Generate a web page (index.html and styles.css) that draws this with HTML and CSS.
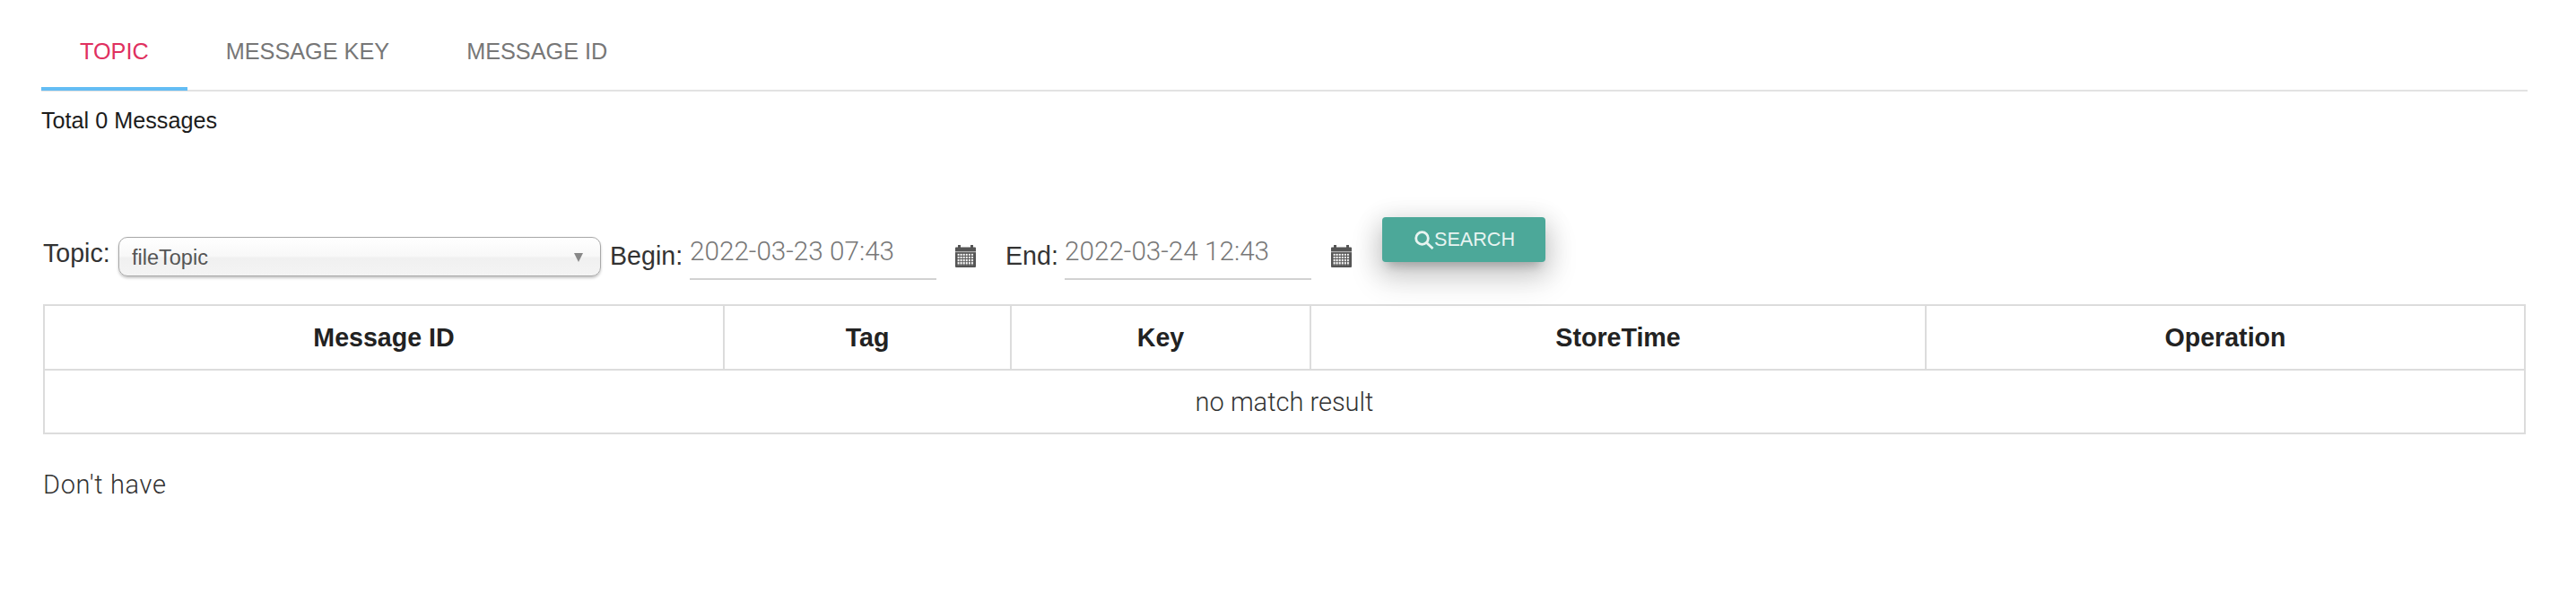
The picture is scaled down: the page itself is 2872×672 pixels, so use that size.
FILE: index.html
```html
<!DOCTYPE html>
<html lang="en">
<head>
<meta charset="utf-8">
<title>Message</title>
<link rel="stylesheet" href="styles.css">
</head>
<body>
<main class="page">
  <nav class="tabs">
    <a class="tab tab-active">TOPIC</a>
    <a class="tab">MESSAGE KEY</a>
    <a class="tab">MESSAGE ID</a>
  </nav>
  <p class="total">Total 0 Messages</p>
  <form class="search-row">
    <label class="label label-topic">Topic:</label>
    <div class="select-wrap">
      <select class="topic-select"><option>fileTopic</option></select>
    </div>
    <label class="label label-begin">Begin:</label>
    <input class="date-input" type="text" value="2022-03-23 07:43">
    <svg class="cal" viewBox="0 0 23 25" aria-hidden="true"><use href="#cal-icon"/></svg>
    <label class="label label-end">End:</label>
    <input class="date-input date-end" type="text" value="2022-03-24 12:43">
    <svg class="cal cal-end" viewBox="0 0 23 25" aria-hidden="true"><use href="#cal-icon"/></svg>
    <button class="search-btn" type="button">
      <svg class="search-icon" viewBox="0 0 22 21" aria-hidden="true"><circle cx="8.500" cy="8.500" r="6.800"/><path d="M13.500 13.500 20.500 20"/></svg>SEARCH
    </button>
  </form>
  <table class="results">
    <colgroup>
      <col class="col-id"><col class="col-tag"><col class="col-key"><col class="col-time"><col class="col-op">
    </colgroup>
    <thead>
      <tr><th>Message ID</th><th>Tag</th><th>Key</th><th>StoreTime</th><th>Operation</th></tr>
    </thead>
    <tbody>
      <tr><td colspan="5">no match result</td></tr>
    </tbody>
  </table>
  <p class="empty">Don't have</p>
</main>
<svg class="defs" aria-hidden="true">
  <defs>
    <pattern id="cal-dots" x="2.400" y="9.600" width="3.100" height="3.200" patternUnits="userSpaceOnUse">
      <rect width="2.100" height="2.200" fill="#fff"/>
    </pattern>
    <symbol id="cal-icon" viewBox="0 0 23 25">
      <path fill="#555" d="M3 0h3v2.500h11V0h3v2.500h2a1 1 0 0 1 1 1V24a1 1 0 0 1-1 1H1a1 1 0 0 1-1-1V3.500a1 1 0 0 1 1-1h2z"/>
      <rect x="0" y="7" width="23" height="1.200" fill="#fff" opacity=".55"/>
      <rect x="2.400" y="9.600" width="18.200" height="12.700" fill="url(#cal-dots)"/>
    </symbol>
  </defs>
</svg>
</body>
</html>
```
FILE: styles.css
```css
* { box-sizing: border-box; }
html, body { margin: 0; background: #fff; }
body {
  font-family: "Liberation Sans", Arial, sans-serif;
  color: #222;
  height: 672px;
  overflow: hidden;
}
.page { padding-left: 46px; width: 2818px; }

.tabs {
  display: flex;
  height: 102px;
  border-bottom: 2px solid #e2e2e2;
}
.tab {
  height: 101px;
  padding: 39px 43px 0;
  font-size: 25.250px;
  line-height: 36px;
  color: #777;
}
.tab-active {
  color: #e0305f;
  border-bottom: 4px solid #64bdf4;
  height: 101px;
}

.total {
  margin: 0;
  padding-top: 16px;
  font-size: 25.200px;
  line-height: 32px;
  color: #1c1c1c;
  height: 49px;
}

.search-row {
  display: flex;
  align-items: flex-start;
  height: 188px;
  padding-left: 2px;
}
.label {
  font-size: 28.600px;
  line-height: 34px;
  color: #333;
  margin-top: 114px;
}
.label-topic { width: 84px; }
.label-begin { margin-top: 117px; margin-left: 10px; width: 89px; }
.label-end { margin-top: 117px; margin-left: 33px; width: 66px; }

.select-wrap {
  position: relative;
  width: 538px;
  height: 44px;
  margin-top: 113px;
}
.select-wrap::after {
  content: "";
  position: absolute;
  left: 508px;
  top: 18px;
  border-style: solid;
  border-width: 10px 5.500px 0;
  border-color: #888 transparent transparent;
}
.topic-select {
  appearance: none;
  display: block;
  width: 100%;
  height: 100%;
  padding: 2px 0 0 14px;
  font-family: "Liberation Sans", Arial, sans-serif;
  font-size: 23.500px;
  color: #555;
  border: 1px solid #a8a8a8;
  border-radius: 10px;
  background: linear-gradient(#fff 0%, #f8f8f8 48%, #f0f0f0 54%, #f4f4f4 100%);
  box-shadow: 0 2px 3px rgba(0, 0, 0, .22);
}

.date-input {
  width: 275px;
  height: 46px;
  margin-top: 115px;
  padding: 0 0 17px;
  border: 0;
  border-bottom: 2px solid #d2d2d2;
  outline: 0;
  font-family: Roboto, "Liberation Sans", sans-serif;
  font-weight: 300;
  font-size: 29.700px;
  color: #777;
  background: transparent;
}
.cal {
  width: 23px;
  height: 25px;
  margin-top: 122px;
  margin-left: 21px;
}
.cal-end { margin-left: 22px; }
.defs { position: absolute; width: 0; height: 0; }

.search-btn {
  display: flex;
  align-items: center;
  justify-content: center;
  width: 182px;
  height: 50px;
  margin-top: 91px;
  margin-left: 34px;
  padding: 0;
  border: 0;
  border-radius: 4px;
  background: #4ca899;
  color: #e8f4f1;
  font-family: "Liberation Sans", Arial, sans-serif;
  font-size: 21.600px;
  box-shadow: 0 16px 34px 4px rgba(0, 0, 0, .14), 0 6px 28px 4px rgba(0, 0, 0, .12), 0 10px 10px -6px rgba(0, 0, 0, .2);
}
.search-icon {
  width: 22px;
  height: 21px;
  margin-left: 2px;
  fill: none;
  stroke: #e8f4f1;
  stroke-width: 2.800;
}

.results {
  border-collapse: collapse;
  table-layout: fixed;
  width: 2766px;
  margin-left: 2px;
}
.col-id { width: 758px; }
.col-tag { width: 320px; }
.col-key { width: 334px; }
.col-time { width: 686px; }
.col-op { width: 668px; }
.results th, .results td {
  border: 2px solid #dcdcdc;
  padding: 0;
  text-align: center;
  color: #222;
}
.results th {
  height: 72px;
  font-size: 28.600px;
  font-weight: 700;
}
.results td {
  height: 71px;
  font-family: Roboto, "Liberation Sans", sans-serif;
  font-weight: 300;
  font-size: 29px;
  color: #333;
}
.empty {
  margin: 0;
  padding: 39px 0 0 2px;
  font-family: Roboto, "Liberation Sans", sans-serif;
  font-weight: 300;
  font-size: 29px;
  letter-spacing: .65px;
  line-height: 34px;
  color: #333;
}
```
